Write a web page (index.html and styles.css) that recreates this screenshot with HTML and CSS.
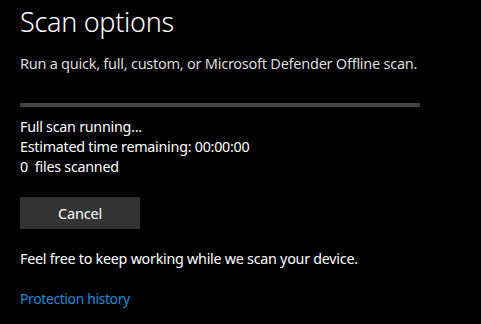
FILE: index.html
```html
<!DOCTYPE html>
<html>
<head>
<meta charset="utf-8">
<link rel="stylesheet" href="styles.css">
</head>
<body>
<main class="page">
  <h1 class="title">Scan options</h1>
  <p class="subtitle">Run a quick, full, custom, or Microsoft Defender Offline scan.</p>
  <div class="progress"></div>
  <div class="status">
    <div>Full scan running...</div>
    <div>Estimated time remaining: 00:00:00</div>
    <div>0&nbsp; files scanned</div>
  </div>
  <button class="btn">Cancel</button>
  <p class="note">Feel free to keep working while we scan your device.</p>
  <a class="link" href="#">Protection history</a>
</main>
</body>
</html>
```
FILE: styles.css
```css
html, body {
  margin: 0;
  padding: 0;
  background: #000;
}
body {
  width: 481px;
  height: 324px;
  overflow: hidden;
  font-family: "Noto Sans", "Open Sans", sans-serif;
  color: #fff;
}
.page {
  padding: 0 20px;
  display: flex;
  flex-direction: column;
  align-items: flex-start;
}
.title {
  margin: 3px 0 0;
  font-weight: 300;
  font-size: 27px;
  line-height: 38px;
  letter-spacing: -0.3px;
}
.subtitle {
  margin: 12px 0 0;
  font-size: 14.5px;
  line-height: 20px;
  color: #dcdcdc;
  letter-spacing: -0.25px;
}
.progress {
  margin-top: 30px;
  width: 400px;
  height: 4px;
  background: #444;
}
.status {
  margin-top: 10px;
  font-size: 14.3px;
  line-height: 20px;
  letter-spacing: -0.25px;
}
.btn {
  margin-top: 20px;
  width: 120px;
  height: 32px;
  background: #333;
  border: 0;
  color: #fff;
  font-family: inherit;
  font-size: 14.5px;
  letter-spacing: -0.2px;
  padding: 0;
}
.note {
  margin: 20px 0 0;
  font-size: 14.3px;
  line-height: 20px;
  letter-spacing: -0.25px;
}
.link {
  margin-top: 20px;
  font-size: 14px;
  line-height: 20px;
  color: #1e88d8;
  text-decoration: none;
  letter-spacing: -0.4px;
}
```
